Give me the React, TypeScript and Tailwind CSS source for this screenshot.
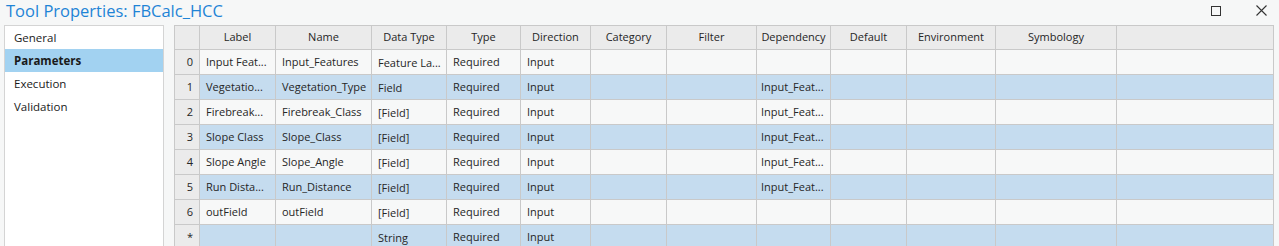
import React from 'react';

const font = { fontFamily: '"Open Sans", "Noto Sans", sans-serif' };

type Row = {
  id: string;
  label: string;
  name: string;
  dataType: string;
  type: string;
  direction: string;
  dependency: string;
};

const rows: Row[] = [
  { id: '0', label: 'Input Feat...', name: 'Input_Features', dataType: 'Feature La...', type: 'Required', direction: 'Input', dependency: '' },
  { id: '1', label: 'Vegetatio...', name: 'Vegetation_Type', dataType: 'Field', type: 'Required', direction: 'Input', dependency: 'Input_Feat...' },
  { id: '2', label: 'Firebreak...', name: 'Firebreak_Class', dataType: '[Field]', type: 'Required', direction: 'Input', dependency: 'Input_Feat...' },
  { id: '3', label: 'Slope Class', name: 'Slope_Class', dataType: '[Field]', type: 'Required', direction: 'Input', dependency: 'Input_Feat...' },
  { id: '4', label: 'Slope Angle', name: 'Slope_Angle', dataType: '[Field]', type: 'Required', direction: 'Input', dependency: 'Input_Feat...' },
  { id: '5', label: 'Run Dista...', name: 'Run_Distance', dataType: '[Field]', type: 'Required', direction: 'Input', dependency: 'Input_Feat...' },
  { id: '6', label: 'outField', name: 'outField', dataType: '[Field]', type: 'Required', direction: 'Input', dependency: '' },
  { id: '*', label: '', name: '', dataType: 'String', type: 'Required', direction: 'Input', dependency: '' },
];

const headers = ['Label', 'Name', 'Data Type', 'Type', 'Direction', 'Category', 'Filter', 'Dependency', 'Default', 'Environment', 'Symbology', ''];

// column widths taken from the grid lines
const widths = ['w-[25px]', 'w-[76px]', 'w-[96px]', 'w-[75px]', 'w-[74px]', 'w-[70px]', 'w-[76px]', 'w-[90px]', 'w-[74px]', 'w-[76px]', 'w-[89px]', 'w-[121px]', 'w-[157px]'];

const navItems = ['General', 'Parameters', 'Execution', 'Validation'];

function Cell({ children, className = 'h-[25px]' }: { children?: React.ReactNode; className?: string }) {
  return (
    <td className={`border border-[#c9c9c9] py-0 whitespace-nowrap overflow-hidden text-[11px] text-[#262626] ${className}`}>
      {children}
    </td>
  );
}

export default function App() {
  return (
    <div className="w-[1279px] h-[246px] overflow-hidden bg-[#f6f7f7]" style={font}>
      {/* Title bar */}
      <div className="flex items-center h-[25px] pl-[6px] pr-[12px]">
        <h1 className="text-[16.5px] leading-none text-[#1f84d6] -mt-[3px]">Tool Properties: FBCalc_HCC</h1>
        <div className="ml-auto flex items-center gap-[35px] -mt-[4px]">
          <div className="w-[10px] h-[10px] border border-[#333]" />
          <svg width="11" height="11" viewBox="0 0 11 11">
            <path d="M0.5 0.5 L10.5 10.5 M10.5 0.5 L0.5 10.5" stroke="#333" strokeWidth="1.1" />
          </svg>
        </div>
      </div>

      <div className="flex pl-[4px]">
        {/* Left nav */}
        <div className="w-[160px] h-[230px] bg-white border border-[#d4d4d4] border-b-0 shrink-0">
          {navItems.map((item) => (
            <div
              key={item}
              className={`h-[23px] flex items-center pl-[9px] text-[11.5px] text-[#1a1a1a] ${
                item === 'Parameters' ? 'bg-[#a2d2f1] font-bold' : ''
              }`}
            >
              {item}
            </div>
          ))}
        </div>

        {/* Parameters grid */}
        <div className="ml-[10px]">
          <table className="border-collapse table-fixed w-[1100px]">
            <colgroup>
              {widths.map((w, i) => (
                <col key={i} className={w} />
              ))}
            </colgroup>
            <thead>
              <tr className="bg-[#ebebeb]">
                <Cell className="h-[24px]" />
                {headers.map((h, i) => (
                  <Cell key={i} className="h-[24px] text-center px-[2px]">
                    {h}
                  </Cell>
                ))}
              </tr>
            </thead>
            <tbody>
              {rows.map((r, i) => (
                <tr key={r.id} className={i % 2 === 1 ? 'bg-[#c5dcef]' : 'bg-[#f7f8f8]'}>
                  <Cell className="h-[25px] bg-[#ebebeb] text-right pr-[6px]">{r.id}</Cell>
                  <Cell className="h-[25px] px-[6px]">{r.label}</Cell>
                  <Cell className="h-[25px] px-[6px]">{r.name}</Cell>
                  <Cell className="h-[25px] px-[6px] pt-[3px]">{r.dataType}</Cell>
                  <Cell className="h-[25px] px-[6px]">{r.type}</Cell>
                  <Cell className="h-[25px] px-[6px]">{r.direction}</Cell>
                  <Cell />
                  <Cell />
                  <Cell className="h-[25px] px-[4px] text-[#333]">{r.dependency}</Cell>
                  <Cell />
                  <Cell />
                  <Cell />
                  <Cell />
                </tr>
              ))}
            </tbody>
          </table>
        </div>
      </div>
    </div>
  );
}
